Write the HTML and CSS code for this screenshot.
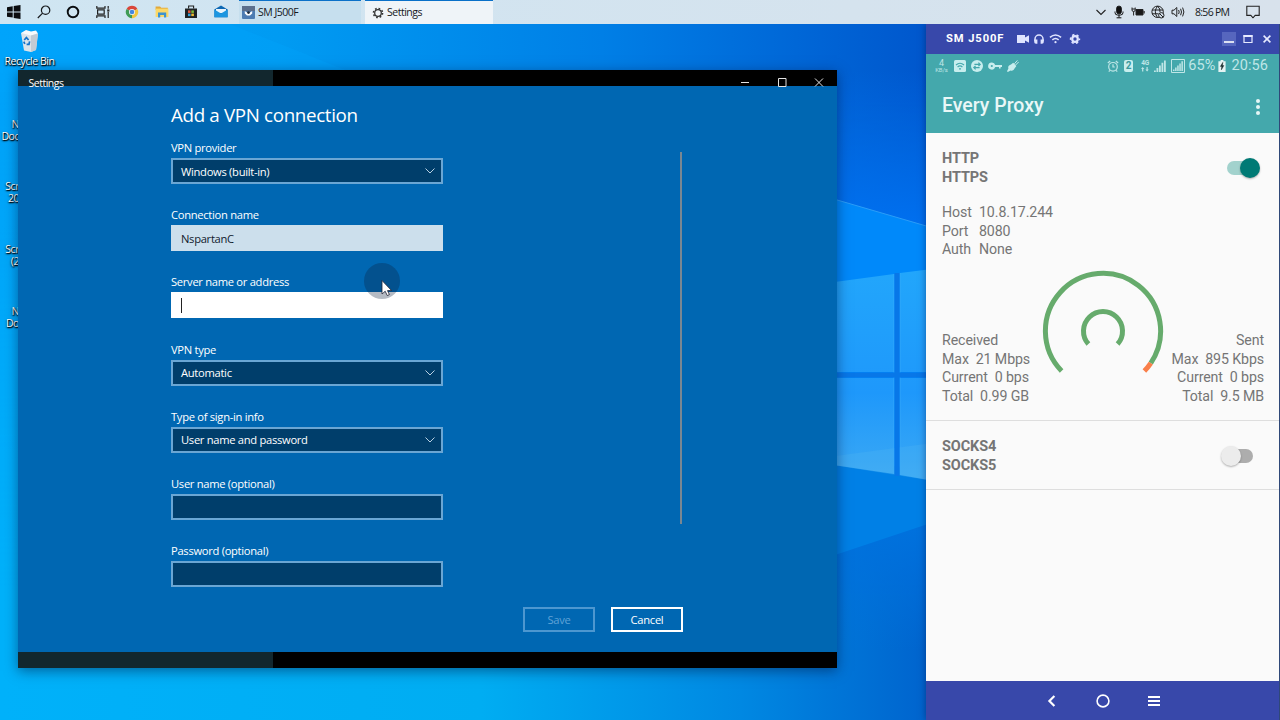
FILE: index.html
```html
<!DOCTYPE html>
<html lang="en">
<head>
    <meta charset="UTF-8">
    <title>Desktop</title>
    <link rel="stylesheet" href="styles.css">
</head>
<body>
<div class="taskbar">
    <div class="launchers">
        <svg width="14" height="14" viewBox="0 0 14 14"><path d="M0 2.2L5.7 1.3V6.5H0zM6.7 1.1L13.5 0V6.5H6.7zM0 7.4H5.7V12.6L0 11.8zM6.7 7.4H13.5V14L6.7 12.9z" fill="#0b0d10"/></svg>
        <svg width="14" height="14" viewBox="0 0 14 14" fill="none" stroke="#16191c" stroke-width="1.2"><circle cx="8.6" cy="5.2" r="4.2"/><path d="M5.6 8.2L.8 13"/></svg>
        <svg width="14" height="14" viewBox="0 0 14 14" fill="none" stroke="#0b0d10" stroke-width="1.9"><circle cx="7" cy="7" r="5.3"/></svg>
        <svg width="14" height="14" viewBox="0 0 14 14" fill="none" stroke="#222" stroke-width="1.2"><path d="M.8 1V3.1H9V1M.8 13V10.9H9V13M1.6 4.8H8.2V9.2H1.6zM12.2 1V3.8M12.2 7V13"/><path d="M11.2 4.4H13.4V6.6H11.2z" fill="#222" stroke="none"/></svg>
        <svg width="14" height="14" viewBox="0 0 14 14"><path d="M7 7L1.6 3.9A6.2 6.2 0 0 1 12.4 3.9z" fill="#d9463a"/><path d="M7 7V13.2A6.2 6.2 0 0 1 1.6 3.9z" fill="#3f9b55"/><path d="M7 7L12.4 3.9A6.2 6.2 0 0 1 7 13.2z" fill="#f2c53d"/><circle cx="7" cy="7" r="3" fill="#f4f6f8"/><circle cx="7" cy="7" r="2.3" fill="#4587e0"/></svg>
        <svg width="14" height="14" viewBox="0 0 14 14"><path d="M.6 1.4H5L6.3 2.8H12.8V5H.6z" fill="#e2a93b"/><path d="M.6 3.6H13.4V12H.6z" fill="#fbd868"/><path d="M3 12.6V7.6H11.2V12.6H9V10H5.2V12.6z" fill="#3d93cf"/></svg>
        <svg width="14" height="14" viewBox="0 0 14 14"><path d="M4.6 3.6V1H9.6V3.6" fill="none" stroke="#222" stroke-width="1.1"/><path d="M1 3.5H13V13H1z" fill="#1e2224"/><path d="M4 5.4H6.6V7.9H4z" fill="#e2543c"/><path d="M7.3 5.4H9.9V7.9H7.3z" fill="#7dba3c"/><path d="M4 8.6H6.6V11.1H4z" fill="#33a3dc"/><path d="M7.3 8.6H9.9V11.1H7.3z" fill="#f1bb34"/></svg>
        <svg width="14" height="14" viewBox="0 0 14 14"><path d="M.4 4.4L7 0.4L13.6 4.4V12.2H.4z" fill="#0d68b4"/><path d="M2 4H12V8H2z" fill="#e9f4fb"/><path d="M.4 4.6L7 8.6L13.6 4.6V12.2H.4z" fill="#1c96e0"/></svg>
    </div>
    <div class="task">
        <svg width="13" height="13" viewBox="0 0 13 13"><rect width="13" height="13" rx="1" fill="#4d7cb2"/><path d="M0 0H13V5H0z" fill="#5b6f8c"/><path d="M2.8 5L4.5 6.2H8.5L10.2 5V7.5L8 9.5H5L2.8 7.5z" fill="#fff"/><circle cx="6.5" cy="6.6" r="1.4" fill="#1b2735"/></svg>
        <span>SM J500F</span>
    </div>
    <div class="task active">
        <svg width="12" height="12" viewBox="0 0 12 12" fill="none" stroke="#333"><circle cx="6" cy="6" r="3.3" stroke-width="1.3"/><circle cx="6" cy="6" r="4.6" stroke-width="1.5" stroke-dasharray="1.7 1.91"/></svg>
        <span>Settings</span>
    </div>
    <div class="tray">
        <svg width="12" height="12" viewBox="0 0 12 12" fill="none" stroke="#222" stroke-width="1.1"><path d="M1.5 4L6 8.4L10.5 4"/></svg>
        <svg width="12" height="14" viewBox="0 0 12 14" fill="none" stroke="#111"><rect x="3.7" y="1.2" width="4.6" height="7.6" rx="2" fill="#111"/><path d="M2 6.5V7.5Q2 10 4.5 10H7.5Q10 10 10 7.5V6.5M6 10V12.6M3.6 12.8H8.4"/></svg>
        <svg width="14" height="12" viewBox="0 0 14 12"><path d="M5 3.5H12V9H5z" fill="#181818" stroke="#222"/><path d="M12.5 5H13.7V7.6H12.5z" fill="#222"/><path d="M1 1.5V4Q1 5.5 2.6 5.5T4.2 4V1.5M1 3H4.2M2.6 5.5V9.5" fill="none" stroke="#222"/></svg>
        <svg width="14" height="14" viewBox="0 0 14 14" fill="none" stroke="#222"><circle cx="6.6" cy="6.8" r="5.7"/><path d="M1 5H12.2M1 8.8H7.5M6.6 1Q2 6.8 6.6 12.6M6.6 1Q9.6 4 9 7"/><circle cx="10.3" cy="10.3" r="2.7" fill="#d4e0eb"/><path d="M8.4 8.4L12.2 12.2"/></svg>
        <svg width="15" height="12" viewBox="0 0 15 12" fill="none" stroke="#222"><path d="M1 4.2H3L5.8 1.5V10.5L3 7.8H1zM7.6 4Q8.8 6 7.6 8M9.6 2.8Q11.4 6 9.6 9.2M11.6 1.6Q14.2 6 11.6 10.4"/></svg>
        <span class="clock">8:56 PM</span>
        <svg width="14" height="14" viewBox="0 0 14 14" fill="none" stroke="#222" stroke-width="1.1"><path d="M.8 1.2H13.2V10.4H9.2L7 12.8L4.8 10.4H.8z"/></svg>
    </div>
</div>

<div class="desktop">
    <svg class="wallpaper" width="1280" height="696" viewBox="0 24 1280 696">
        <defs>
            <linearGradient id="base" x1="0" x2="926" y1="0" y2="0" gradientUnits="userSpaceOnUse">
                <stop offset="0" stop-color="#00a3fa"/>
                <stop offset=".3" stop-color="#009bf2"/>
                <stop offset=".65" stop-color="#007fe6"/>
                <stop offset="1" stop-color="#0057cd"/>
            </linearGradient>
            <linearGradient id="floor" x1="0" x2="926" y1="0" y2="0" gradientUnits="userSpaceOnUse">
                <stop offset="0" stop-color="#00b1fa"/>
                <stop offset=".52" stop-color="#00adf2"/>
                <stop offset=".8" stop-color="#0088e2"/>
                <stop offset="1" stop-color="#0064ce"/>
            </linearGradient>
            <linearGradient id="fade" x1="0" x2="0" y1="100" y2="600" gradientUnits="userSpaceOnUse">
                <stop offset="0" stop-color="#000"/>
                <stop offset="1" stop-color="#fff"/>
            </linearGradient>
            <mask id="floor-mask"><path d="M0 24H1280V720H0z" fill="url(#fade)"/></mask>
            <linearGradient id="glow" x1="0" x2="0" y1="70" y2="230" gradientUnits="userSpaceOnUse">
                <stop offset="0" stop-color="#0070f0" stop-opacity="0"/>
                <stop offset="1" stop-color="#0070f0"/>
            </linearGradient>
            <linearGradient id="beam" x1="0" x2="0" y1="520" y2="650" gradientUnits="userSpaceOnUse">
                <stop offset="0" stop-color="#0072de"/>
                <stop offset="1" stop-color="#0072de" stop-opacity="0"/>
            </linearGradient>
            <linearGradient id="pane" x1="0" x2="0" y1="270" y2="475" gradientUnits="userSpaceOnUse">
                <stop offset="0" stop-color="#22a6fb"/>
                <stop offset=".6" stop-color="#1e98fb"/>
                <stop offset="1" stop-color="#3aa8f4"/>
            </linearGradient>
        </defs>
        <path d="M0 24H1280V720H0z" fill="url(#base)"/>
        <path d="M0 24H1280V720H0z" fill="url(#floor)" mask="url(#floor-mask)"/>
        <path d="M0 24H230L400 92H0z" fill="#00a8ff" opacity=".25"/>
        <path d="M820 70H940V240H820z" fill="url(#glow)"/>
        <path d="M820 195L940 230V500H820z" fill="#0089fa"/>
        <path d="M820 195L940 230" stroke="#2b9df8" fill="none"/>
        <path d="M820 520H940V650H820z" fill="url(#beam)"/>
        <path d="M820 460L940 470V520L820 560z" fill="#0080e6"/>
        <path d="M820 284L894 274V372H820zM900 273L940 268V372H900zM820 378H894V474L820 463zM900 378H940V482L900 475z" fill="url(#pane)"/>
        <path d="M820 458L940 442V482L820 463z" fill="#55b8f4" opacity=".25"/>
        <path d="M894 274V474M900 273V475" stroke="#3cadfa" opacity=".6"/>
        <path d="M897 273V476M820 375H940" stroke="#0877e8" stroke-width="5"/>
    </svg>

    <div class="shortcut recycle">
        <svg width="22" height="24" viewBox="0 0 22 24"><path d="M2 4L19 4.6L17 21L12 23L5 21.5z" fill="#dce4ea"/><path d="M2 4L7 1L12 2.4L17 1.6L19 4.6L12 6.6z" fill="#f8fafb"/><path d="M12 6.6L19 4.6L17 21L12 23z" fill="#c2cbd3"/><path d="M5.2 11L7.4 8.6L9.6 11M10.6 12.4L10 15.4H7.6M5.8 15L4.8 12.6" fill="none" stroke="#1773c8" stroke-width="1.7"/></svg>
        <span>Recycle Bin</span>
    </div>
    <div class="shortcut s1">N<br>Doc</div>
    <div class="shortcut s2">Scr<br>20</div>
    <div class="shortcut s3">Scr<br>(2</div>
    <div class="shortcut s4">N<br>Do</div>

    <div class="settings">
        <div class="titlebar">
            <span>Settings</span>
            <div class="win-buttons">
                <svg width="10" height="10" viewBox="0 0 10 10"><path d="M1 4.5H9" stroke="#e4e4e4"/></svg>
                <svg width="10" height="10" viewBox="0 0 10 10"><path d="M1.5 .5H9V8.5H1.5z" fill="none" stroke="#e4e4e4"/></svg>
                <svg width="10" height="10" viewBox="0 0 10 10"><path d="M1 .5L9 8.5M9 .5L1 8.5" stroke="#e4e4e4"/></svg>
            </div>
        </div>
        <div class="dialog">
            <div class="form">
                <h1>Add a VPN connection</h1>
                <div class="field">
                    <label>VPN provider</label>
                    <div class="box">Windows (built-in)<svg width="10" height="6" viewBox="0 0 10 6"><path d="M.5 .5L5 5L9.5 .5"/></svg></div>
                </div>
                <div class="field">
                    <label>Connection name</label>
                    <div class="box filled">NspartanC</div>
                </div>
                <div class="field">
                    <label>Server name or address</label>
                    <div class="box focused"><i class="caret"></i></div>
                </div>
                <div class="field">
                    <label>VPN type</label>
                    <div class="box">Automatic<svg width="10" height="6" viewBox="0 0 10 6"><path d="M.5 .5L5 5L9.5 .5"/></svg></div>
                </div>
                <div class="field">
                    <label>Type of sign-in info</label>
                    <div class="box">User name and password<svg width="10" height="6" viewBox="0 0 10 6"><path d="M.5 .5L5 5L9.5 .5"/></svg></div>
                </div>
                <div class="field">
                    <label>User name (optional)</label>
                    <div class="box"></div>
                </div>
                <div class="field">
                    <label>Password (optional)</label>
                    <div class="box"></div>
                </div>
            </div>
            <div class="scrollbar"></div>
            <div class="actions">
                <div class="button disabled">Save</div>
                <div class="button">Cancel</div>
            </div>
        </div>
        <div class="bottom-band"></div>
    </div>

    <div class="pointer">
        <svg width="36" height="36" viewBox="0 0 36 36"><circle cx="18" cy="18" r="18" fill="#0a1e3c" opacity=".3"/><path d="M18 17.5V31L21.2 28.3L23.3 32.6L25.4 31.6L23.5 27.6H27.6z" fill="#fff" stroke="#223" stroke-width=".8"/></svg>
    </div>

    <div class="phone">
        <div class="phone-title">
            <b>SM J500F</b>
            <div class="phone-tools">
                <svg width="12" height="12" viewBox="0 0 12 12"><path d="M0 2H8V4.6L12 2.2V9.8L8 7.4V10H0z"/></svg>
                <svg width="12" height="12" viewBox="0 0 12 12"><path d="M2 8V6A4 4 0 0 1 10 6V8" fill="none" stroke="#dfe4ff" stroke-width="1.5"/><path d="M1.2 6.5H4.4V10.8H3Q1.2 10.6 1.2 9zM7.6 6.5H10.8V9Q10.8 10.6 9 10.8H7.6z"/></svg>
                <svg width="13" height="12" viewBox="0 0 14 12" fill="none" stroke="#dfe4ff" stroke-width="1.7"><path d="M1 4.3Q7 -.8 13 4.3M3.6 7Q7 4 10.4 7"/><circle cx="7" cy="9.4" r="1.2" stroke="none" fill="#dfe4ff"/></svg>
                <svg class="gear" width="12" height="12" viewBox="0 0 12 12" fill="none" stroke="#dfe4ff"><circle cx="6" cy="6" r="2.8" stroke-width="2.2"/><circle cx="6" cy="6" r="4.4" stroke-width="1.6" stroke-dasharray="2.3 2.3" stroke-dashoffset="1.15"/></svg>
            </div>
            <div class="phone-win">
                <span class="min"><svg width="14" height="14" viewBox="0 0 14 14"><path d="M2 10H12" stroke="#fff" stroke-width="1.6"/></svg></span>
                <svg width="10" height="10" viewBox="0 0 10 10"><path d="M1 1.5H9V8.5H1z" fill="none" stroke="#e6eaff" stroke-width="1.2"/><path d="M.5 1H9.5V3H.5z"/></svg>
                <svg width="8" height="8" viewBox="0 0 8 8"><path d="M.6 .6L7.4 7.4M7.4 .6L.6 7.4" stroke="#e6eaff" stroke-width="1.6"/></svg>
            </div>
        </div>
        <div class="status">
            <div class="notices">
                <span class="rate">4<small>KB/s</small></span>
                <svg width="12" height="12" viewBox="0 0 12 12"><rect width="12" height="12" rx="1.5" fill="#c8eeee"/><path d="M2 5Q6 1.5 10 5M3.6 7Q6 4.8 8.4 7M5 8.8H7" stroke="#44a8ac" fill="none" stroke-width="1.2"/></svg>
                <svg width="12" height="12" viewBox="0 0 12 12"><circle cx="6" cy="6" r="6" fill="#c8eeee"/><path d="M3.4 4.4H9M7.4 2.6L9.2 4.4L7.4 6.2M8.6 7.6H3M4.6 5.8L2.8 7.6L4.6 9.4" stroke="#44a8ac" fill="none" stroke-width="1.2"/></svg>
                <svg width="14" height="12" viewBox="0 0 14 12"><path d="M4 2.4A3.6 3.6 0 1 0 7.2 7H11V8.6H12.6V7H14V5H7.2A3.6 3.6 0 0 0 4 2.4zM3.8 4.9A1.1 1.1 0 1 1 3.8 7.1A1.1 1.1 0 0 1 3.8 4.9z" fill="#c8eeee" fill-rule="evenodd"/></svg>
                <svg width="12" height="12" viewBox="0 0 12 12"><path d="M1.4 8.5Q.4 5.5 4 4.4L6.2 2.8L9.4 6L7.7 8.2Q6.5 11.4 3.6 10.4L.8 12L0 11.2z" fill="#c8eeee"/><path d="M7.4 3.8L10.4 .4M8.6 5L11.8 1.8" stroke="#c8eeee"/></svg>
            </div>
            <div class="signals">
                <svg width="12" height="12" viewBox="0 0 12 12" fill="none" stroke="#bfe6e7" stroke-width="1.2"><circle cx="6" cy="6.8" r="4.3"/><path d="M6 4.2V7H7.8M.8 3L3.2 1M11.2 3L8.8 1M2.8 10.4L1.8 11.6M9.2 10.4L10.2 11.6"/></svg>
                <span class="sim">2</span>
                <span class="net">4G<svg width="8" height="5" viewBox="0 0 8 5"><path d="M0 2L1.7 0L3.4 2H2.3V4.6H1.1V2zM4.4 2.6H5.5V0H6.7V2.6H7.8L6.1 4.6z"/></svg></span>
                <svg width="12" height="12" viewBox="0 0 12 12" fill="#bfe6e7"><path d="M0 10.4H1.8V12H0zM2.5 8H4.3V12H2.5zM5 5.4H6.8V12H5zM7.5 2.8H9.3V12H7.5zM10 .4H11.8V12H10z"/></svg>
                <svg width="14" height="14" viewBox="0 0 14 14"><path d="M.5 .5H13.5V13.5H.5z" fill="none" stroke="#bfe6e7"/><path d="M2 10.6H3.5V12H2zM4.1 8.4H5.6V12H4.1zM6.2 6.4H7.7V12H6.2zM8.3 4.4H9.8V12H8.3zM10.4 2.2H11.9V12H10.4z" fill="#bfe6e7"/></svg>
                <span class="percent">65%</span>
                <svg width="8" height="12" viewBox="0 0 8 12"><path d="M2.6 0H5.4V1.2H7.6V12H.4V1.2H2.6z" fill="#e4f3f3"/><path d="M4.8 2.4L2.4 6.4H3.8L3.4 9.8L5.8 5.6H4.4z" fill="#182a2b" stroke="#182a2b" stroke-width=".5"/></svg>
                <span class="time">20:56</span>
            </div>
        </div>
        <div class="appbar">
            <span>Every Proxy</span>
            <svg width="6" height="16" viewBox="0 0 6 16" fill="#e6f6f6"><circle cx="3" cy="2" r="2"/><circle cx="3" cy="8" r="2"/><circle cx="3" cy="14" r="2"/></svg>
        </div>
        <div class="proxy http">
            <div class="head">
                <b>HTTP<br>HTTPS</b>
                <div class="switch on"></div>
            </div>
            <div class="info">
                <span>Host</span><span>10.8.17.244</span>
                <span>Port</span><span>8080</span>
                <span>Auth</span><span>None</span>
            </div>
            <div class="traffic">
                <div class="col">
                    <div>Received</div>
                    <div>Max&nbsp; 21 Mbps</div>
                    <div>Current&nbsp; 0 bps</div>
                    <div>Total&nbsp; 0.99 GB</div>
                </div>
                <svg class="gauge" width="122" height="122" viewBox="-61 -61 122 122" fill="none" stroke="#66ab6c" stroke-width="5">
                    <path d="M-41.4 40A57.6 57.6 0 1 1 47.8 32.1"/>
                    <path d="M47.8 32.1A57.6 57.6 0 0 1 41.4 40" stroke="#f97f4a"/>
                    <path d="M-14.6 13A19.5 19.5 0 1 1 14.6 13"/>
                </svg>
                <div class="col sent">
                    <div>Sent</div>
                    <div>Max&nbsp; 895 Kbps</div>
                    <div>Current&nbsp; 0 bps</div>
                    <div>Total&nbsp; 9.5 MB</div>
                </div>
            </div>
        </div>
        <div class="proxy socks">
            <div class="head">
                <b>SOCKS4<br>SOCKS5</b>
                <div class="switch"></div>
            </div>
        </div>
        <div class="navbar">
            <svg width="16" height="16" viewBox="0 0 16 16" fill="none" stroke="#fff" stroke-width="2.2"><path d="M10.4 3L5.4 8L10.4 13"/></svg>
            <svg width="16" height="16" viewBox="0 0 16 16" fill="none" stroke="#fff" stroke-width="1.6"><circle cx="8" cy="8" r="5.9"/></svg>
            <svg width="16" height="16" viewBox="0 0 16 16" fill="none" stroke="#fff" stroke-width="2"><path d="M2 4H14M2 8H14M2 12H14"/></svg>
        </div>
    </div>
</div>
</body>
</html>
```
FILE: styles.css
```css
html,
body {
    margin: 0;
    padding: 0;
    width: 1280px;
    height: 720px;
    overflow: hidden;
}

body {
    font: 11.2px "Open Sans", "Noto Sans", sans-serif;
    letter-spacing: -.3px;
    color: #fff;
}

svg {
    display: block;
    flex: none;
}

.taskbar {
    height: 24px;
    display: flex;
    background: linear-gradient(90deg, #cfe5f2, #d8e2ec);
    color: #15181b;
    font-size: 10.5px;
}
.launchers {
    width: 239px;
    display: flex;
    align-items: center;
    gap: 15.5px;
    padding-left: 7px;
    box-sizing: border-box;
    flex: none;
}
.task {
    width: 122px;
    margin-right: 4px;
    padding-left: 3px;
    box-sizing: border-box;
    display: flex;
    align-items: center;
    gap: 3px;
    border-top: 1px solid #0a70c8;
    background: #c6dfee;
    letter-spacing: -.5px;
}
.task span {
    margin-top: -2px;
}
.task.active {
    width: 128px;
    padding-left: 7px;
    background: #eff4f8;
}
.tray {
    margin-left: auto;
    padding-right: 20px;
    display: flex;
    align-items: center;
    gap: 6px;
}
.clock {
    width: 34px;
    margin: -1px 11px 0 3px;
    white-space: nowrap;
    font-size: 10.5px;
    letter-spacing: -.7px;
}

.desktop {
    position: relative;
    height: 696px;
    overflow: hidden;
}
.wallpaper {
    position: absolute;
    top: 0;
    left: 0;
}

.shortcut {
    position: absolute;
    font-size: 10.5px;
    line-height: 12px;
    letter-spacing: -.45px;
    white-space: nowrap;
    text-shadow: 0 1px 2px #000, 1px 1px 1px #000;
}
.recycle {
    left: 5px;
    top: 5px;
    width: 49px;
    display: flex;
    flex-direction: column;
    align-items: center;
    gap: 2px;
}
.s1,
.s2,
.s3,
.s4 {
    left: -20px;
    width: 39px;
    text-align: right;
}
.s1 { top: 94px; }
.s2 { top: 156px; }
.s3 { top: 219px; }
.s4 { top: 281px; }

.settings {
    position: absolute;
    left: 18px;
    top: 46px;
    width: 819px;
    height: 598px;
    display: flex;
    flex-direction: column;
    box-shadow: 0 3px 12px rgba(0, 20, 60, .5);
}
.titlebar,
.bottom-band {
    height: 16px;
    background: linear-gradient(90deg, #12272e 255px, #000 255px);
}
.titlebar {
    position: relative;
    padding: 0 13.5px 0 10.5px;
    display: flex;
    justify-content: space-between;
    font-size: 10.5px;
    line-height: 26px;
    letter-spacing: -.5px;
}
.win-buttons {
    display: flex;
    gap: 27px;
    padding-top: 8px;
}
.dialog {
    flex: 1;
    display: grid;
    grid-template-columns: 509px 3px;
    grid-template-rows: 521px 25px;
    padding-left: 153px;
    background: #0067b2;
}
.form h1 {
    margin: 13px 0 5px;
    font-size: 18.8px;
    font-weight: 400;
    line-height: 32px;
    letter-spacing: -.35px;
}
.field {
    height: 67.2px;
}
.field label {
    display: block;
    height: 22px;
    line-height: 23px;
}
.box {
    width: 272px;
    height: 26px;
    padding: 0 6px 0 8px;
    box-sizing: border-box;
    display: flex;
    align-items: center;
    justify-content: space-between;
    border: 2px solid #6aa6d4;
    background: #003e6b;
}
.box svg {
    fill: none;
    stroke: #b9d0e2;
}
.box.filled {
    background: #ccdfec;
    border-color: #ccdfec;
    color: #10202c;
}
.box.focused {
    background: #fff;
    border-color: #fff;
}
.caret {
    width: 1px;
    height: 15px;
    background: #222;
}
.scrollbar {
    width: 2px;
    height: 372px;
    margin-top: 66px;
    background: #7a8792;
}
.actions {
    grid-column: 1 / 3;
    display: flex;
    justify-content: flex-end;
    gap: 16px;
}
.button {
    width: 72px;
    height: 25px;
    box-sizing: border-box;
    border: 2px solid #fff;
    line-height: 22px;
    text-align: center;
}
.button.disabled {
    border-color: #4d97d0;
    color: #5fa2d6;
}

.pointer {
    position: absolute;
    left: 364px;
    top: 239px;
}

.phone {
    position: absolute;
    left: 926px;
    top: 0;
    width: 354px;
    height: 696px;
    box-sizing: border-box;
    border-right: 1px solid #2f4878;
    display: flex;
    flex-direction: column;
    background: #fafafa;
    color: #757575;
    font: 14.2px/18.6px Roboto, sans-serif;
    letter-spacing: -.1px;
    box-shadow: 0 0 7px rgba(0, 20, 80, .5);
}
.phone-title {
    height: 30px;
    padding: 0 8px 0 20px;
    display: flex;
    align-items: center;
    background: #3848aa;
    color: #fff;
    font-size: 11.2px;
    letter-spacing: .9px;
}
.phone-title b {
    width: 71px;
    padding-top: 1px;
    white-space: nowrap;
}
.phone-tools {
    display: flex;
    gap: 4px;
    fill: #dfe4ff;
}
.gear {
    margin-left: 3px;
}
.phone-win {
    margin-left: auto;
    display: flex;
    align-items: center;
    gap: 10px;
    fill: #e6eaff;
}
.min {
    margin-right: -3px;
    background: #5666be;
}
.status {
    height: 24px;
    padding: 0 11px 0 8px;
    display: flex;
    align-items: center;
    justify-content: space-between;
    background: #44a8ac;
    color: #bfe6e7;
}
.notices,
.signals {
    display: flex;
    align-items: center;
    gap: 5px;
}
.rate {
    width: 15px;
    font-size: 9px;
    line-height: 8px;
    text-align: center;
}
.rate small {
    display: block;
    font-size: 6px;
    line-height: 6px;
}
.sim {
    width: 9px;
    height: 12px;
    border-radius: 2px;
    background: #c8eeee;
    color: #3a9a9e;
    font: bold 10px/12px Roboto, sans-serif;
    text-align: center;
}
.net {
    display: flex;
    flex-direction: column;
    align-items: center;
    margin-left: 3px;
    font: bold 6.5px/7px Roboto, sans-serif;
    fill: #bfe6e7;
}
.percent,
.time {
    padding-top: 1px;
    font-size: 14.5px;
    letter-spacing: .1px;
}
.percent {
    margin: 0 -2px;
}
.appbar {
    height: 55px;
    padding: 2px 18px 0 16px;
    box-sizing: border-box;
    display: flex;
    align-items: center;
    justify-content: space-between;
    background: #44a8ac;
    color: #e9f7f7;
    font-size: 19.5px;
    font-weight: 500;
    letter-spacing: 0;
}
.proxy {
    padding: 0 15px 0 16px;
    border-bottom: 1px solid #dedede;
    box-sizing: border-box;
}
.http {
    height: 288px;
    padding-top: 17px;
}
.socks {
    height: 69px;
    margin-bottom: 1px;
    padding-top: 17px;
}
.head {
    display: flex;
    justify-content: space-between;
    align-items: center;
}
.head b {
    font-size: 14.5px;
    letter-spacing: -.1px;
}
.switch {
    width: 26px;
    height: 14px;
    margin: -2px 11px 0 0;
    border-radius: 7px;
    background: #adadad;
}
/* thumb hangs past the end of its track */
.switch::before {
    content: "";
    display: block;
    width: 20px;
    height: 20px;
    border-radius: 50%;
    background: #ececec;
    box-shadow: 0 1px 2px rgba(0, 0, 0, .3);
    transform: translate(-6px, -3px);
}
.switch.on {
    background: #a2d2cd;
}
.switch.on::before {
    background: #007a75;
    transform: translate(13px, -3px);
}
.info {
    margin-top: 16px;
    display: grid;
    grid-template-columns: 37px auto;
}
.traffic {
    margin-top: 11px;
    display: flex;
    justify-content: space-between;
}
.col {
    width: 100px;
    padding-top: 61px;
    white-space: nowrap;
}
.sent {
    display: flex;
    flex-direction: column;
    align-items: flex-end;
}
.navbar {
    height: 39px;
    margin-top: auto;
    display: flex;
    align-items: center;
    justify-content: center;
    gap: 35px;
    background: #3848aa;
}
```
